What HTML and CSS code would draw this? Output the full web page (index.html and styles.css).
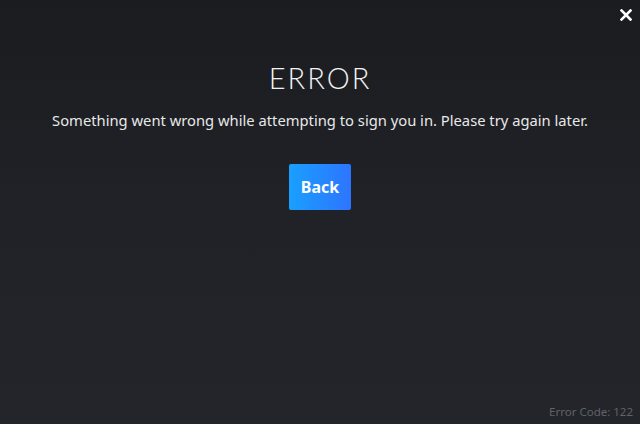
FILE: index.html
```html
<!DOCTYPE html>
<html>
<head>
<meta charset="utf-8">
<link rel="stylesheet" href="styles.css">
</head>
<body>
<div class="page">
  <button class="close" aria-label="Close">
    <svg width="12" height="12" viewBox="0 0 12 12"><path d="M1.5 1.5 L10.5 10.5 M10.5 1.5 L1.5 10.5" stroke="#fff" stroke-width="2.6" stroke-linecap="square"/></svg>
  </button>
  <main class="content">
    <h1 class="title">ERROR</h1>
    <p class="message">Something went wrong while attempting to sign you in. Please try again later.</p>
    <button class="back">Back</button>
  </main>
  <div class="code">Error Code: 122</div>
</div>
</body>
</html>
```
FILE: styles.css
```css
html, body {
  margin: 0;
  height: 100%;
}
body {
  background: linear-gradient(180deg, #1b1c20 0%, #202227 50%, #23252b 100%);
  font-family: "Noto Sans", sans-serif;
  color: #fff;
}
.page {
  position: relative;
  height: 424px;
  display: flex;
  flex-direction: column;
}
.close {
  position: absolute;
  top: 9px;
  right: 8px;
  width: 12px;
  height: 12px;
  padding: 0;
  border: 0;
  background: none;
  display: flex;
}
.content {
  display: flex;
  flex-direction: column;
  align-items: center;
  padding-top: 60px;
  flex: 1;
}
.title {
  margin: 0;
  font-family: "Lato", sans-serif;
  font-weight: 300;
  font-size: 29px;
  letter-spacing: 2px;
  line-height: 36px;
  color: #f2f2f2;
}
.message {
  margin: 13px 0 0;
  font-size: 14.75px;
  line-height: 22px;
  color: #e8e8e8;
}
.back {
  margin-top: 33px;
  width: 62px;
  height: 46px;
  border: 0;
  border-radius: 2px;
  background: linear-gradient(90deg, #1a9fff 0%, #2d75ff 100%);
  color: #fff;
  font-family: "Noto Sans", sans-serif;
  font-weight: 700;
  font-size: 16px;
  padding: 0;
}
.code {
  align-self: flex-end;
  margin: 0 7px 5px 0;
  font-size: 11.5px;
  color: #5f6269;
}
```
